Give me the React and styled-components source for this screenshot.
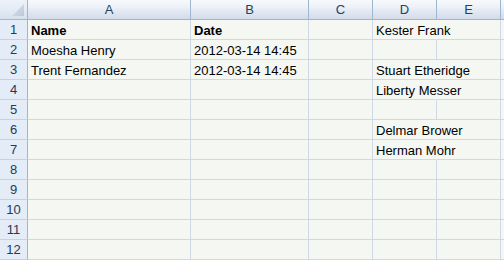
import React from 'react';
import styled, { createGlobalStyle, css } from 'styled-components';

const GlobalStyle = createGlobalStyle`
  html, body {
    margin: 0;
    padding: 0;
    background: #f5f7f2;
  }
  body {
    font-family: "Liberation Sans", Arial, sans-serif;
  }
`;

const columns = [
  { label: 'A', width: 163 },
  { label: 'B', width: 118 },
  { label: 'C', width: 64 },
  { label: 'D', width: 64 },
  { label: 'E', width: 64 },
  { label: '', width: 20 },
];

const rows = [
  [{ text: 'Name', bold: true }, { text: 'Date', bold: true }, null, { text: 'Kester Frank', spill: true }],
  [{ text: 'Moesha Henry' }, { text: '2012-03-14 14:45' }, null, null],
  [{ text: 'Trent Fernandez' }, { text: '2012-03-14 14:45' }, null, { text: 'Stuart Etheridge', spill: true }],
  [null, null, null, { text: 'Liberty Messer', spill: true }],
  [null, null, null, null],
  [null, null, null, { text: 'Delmar Brower', spill: true }],
  [null, null, null, { text: 'Herman Mohr', spill: true }],
  [null, null, null, null],
  [null, null, null, null],
  [null, null, null, null],
  [null, null, null, null],
  [null, null, null, null],
];

const Sheet = styled.div`
  display: grid;
  grid-template-columns: 28px ${columns.map((c) => `${c.width}px`).join(' ')};
  grid-auto-rows: 20px;
  width: 504px;
  height: 260px;
  overflow: hidden;
  background: #f5f7f2;
  font-size: 13px;
`;

const Corner = styled.div`
  box-sizing: border-box;
  display: flex;
  align-items: flex-end;
  justify-content: flex-end;
  padding: 0 3px 3px 0;
  background: linear-gradient(to bottom, #eef3f9 0%, #e1e9f4 60%, #d6e0ed 100%);
  border-right: 1px solid #9eb6ce;
  border-bottom: 1px solid #9eb6ce;
`;

const ColHeader = styled.div`
  box-sizing: border-box;
  display: flex;
  align-items: center;
  justify-content: center;
  background: linear-gradient(
    to bottom,
    #f7f9fc 0%,
    #eef2f8 35%,
    #e1e8f2 60%,
    #d3dce9 100%
  );
  border-right: 1px solid #9eb6ce;
  border-bottom: 1px solid #9eb6ce;
  color: #27415f;
  line-height: 19px;
`;

const RowHeader = styled.div`
  box-sizing: border-box;
  display: flex;
  align-items: center;
  justify-content: center;
  background: #e4ecf7;
  border-right: 1px solid #9eb6ce;
  border-bottom: 1px solid #c5d2e2;
  color: #1f3a5a;
  line-height: 19px;
`;

// cells stay transparent so text that spills into the next empty cell stays visible
const Cell = styled.div`
  box-sizing: border-box;
  padding: 1px 0 0 3px;
  line-height: 19px;
  white-space: nowrap;
  color: #000;
  border-bottom: 1px solid #d0d7e5;
  border-right: 1px solid #d0d7e5;
  ${(props) =>
    props.$bold &&
    css`
      font-weight: bold;
    `}
  ${(props) =>
    props.$spill &&
    css`
      border-right-color: transparent;
      overflow: visible;
    `}
`;

function CornerMark() {
  return (
    <svg width="12" height="12" viewBox="0 0 12 12">
      <defs>
        <linearGradient id="cornerFill" x1="0" y1="0" x2="1" y2="1">
          <stop offset="0" stopColor="#dfe6ef" />
          <stop offset="1" stopColor="#b9c7d8" />
        </linearGradient>
      </defs>
      <polygon points="12,0 12,12 0,12" fill="url(#cornerFill)" />
    </svg>
  );
}

export default function App() {
  return (
    <>
      <GlobalStyle />
      <Sheet>
        <Corner>
          <CornerMark />
        </Corner>
        {columns.map((col, i) => (
          <ColHeader key={i}>{col.label}</ColHeader>
        ))}
        {rows.map((row, r) => (
          <React.Fragment key={r}>
            <RowHeader>{r + 1}</RowHeader>
            {row.map((cell, c) => (
              <Cell key={c} $bold={cell?.bold} $spill={cell?.spill}>
                {cell?.text}
              </Cell>
            ))}
            <Cell />
            <Cell />
          </React.Fragment>
        ))}
      </Sheet>
    </>
  );
}
